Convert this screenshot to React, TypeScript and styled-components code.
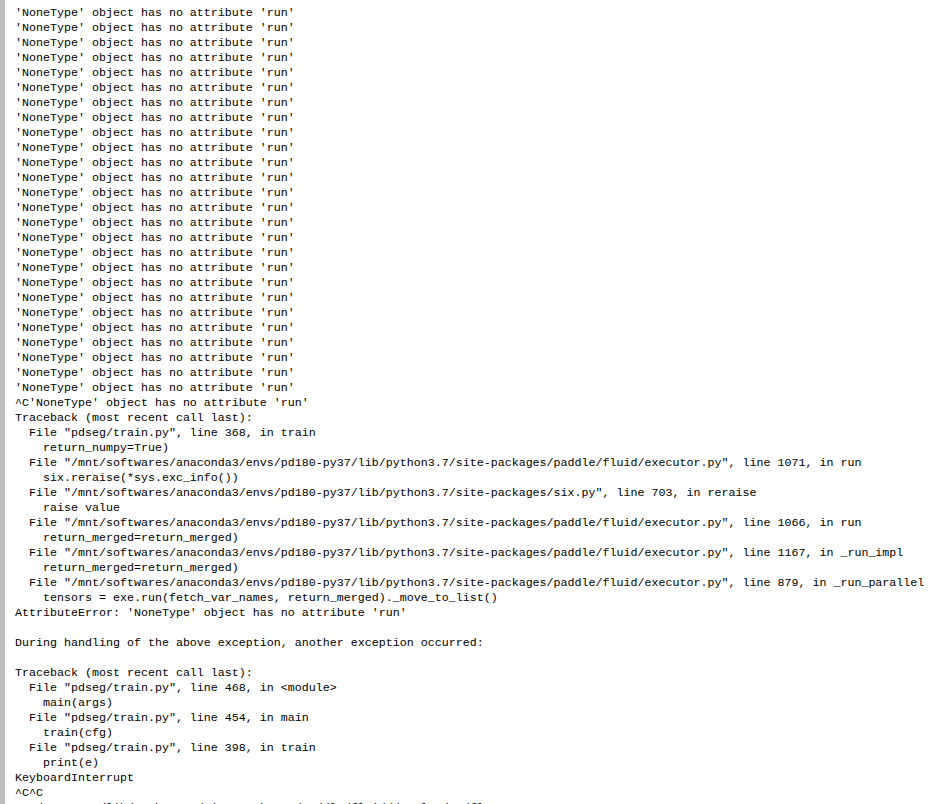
import React from "react";
import styled, { createGlobalStyle } from "styled-components";

const Global = createGlobalStyle`
  html, body { margin: 0; padding: 0; background: #ffffff; }
  body { overflow: hidden; }
`;

const Window = styled.div`
  display: flex;
  width: 937px;
  height: 804px;
  overflow: hidden;
  background: #ffffff;
`;

const Gutter = styled.div`
  flex: 0 0 5px;
  background: #bebebe;
`;

const Output = styled.pre`
  margin: 0;
  padding: 6px 0 0 10px;
  font-family: "Liberation Mono", "Courier New", monospace;
  font-size: 11.67px;
  line-height: 15px;
  color: #000000;
  white-space: pre;
`;

const Line = styled.div`
  height: 15px;
`;

const P = "/mnt/softwares/anaconda3/envs/pd180-py37/lib/python3.7/site-packages";

const lines: string[] = [
  ...Array.from({ length: 26 }, () => "'NoneType' object has no attribute 'run'"),
  "^C'NoneType' object has no attribute 'run'",
  "Traceback (most recent call last):",
  '  File "pdseg/train.py", line 368, in train',
  "    return_numpy=True)",
  `  File "${P}/paddle/fluid/executor.py", line 1071, in run`,
  "    six.reraise(*sys.exc_info())",
  `  File "${P}/six.py", line 703, in reraise`,
  "    raise value",
  `  File "${P}/paddle/fluid/executor.py", line 1066, in run`,
  "    return_merged=return_merged)",
  `  File "${P}/paddle/fluid/executor.py", line 1167, in _run_impl`,
  "    return_merged=return_merged)",
  `  File "${P}/paddle/fluid/executor.py", line 879, in _run_parallel`,
  "    tensors = exe.run(fetch_var_names, return_merged)._move_to_list()",
  "AttributeError: 'NoneType' object has no attribute 'run'",
  "",
  "During handling of the above exception, another exception occurred:",
  "",
  "Traceback (most recent call last):",
  '  File "pdseg/train.py", line 468, in <module>',
  "    main(args)",
  '  File "pdseg/train.py", line 454, in main',
  "    train(cfg)",
  '  File "pdseg/train.py", line 398, in train',
  "    print(e)",
  "KeyboardInterrupt",
  "^C^C",
  "  pd180-py37/lib/python3.7/site-packages/paddle/fluid/dataloader/flat.py:81",
];

export default function App() {
  return (
    <>
      <Global />
      <Window>
        <Gutter />
        <Output>
          {lines.map((l, i) => (
            <Line key={i}>{l}</Line>
          ))}
        </Output>
      </Window>
    </>
  );
}
